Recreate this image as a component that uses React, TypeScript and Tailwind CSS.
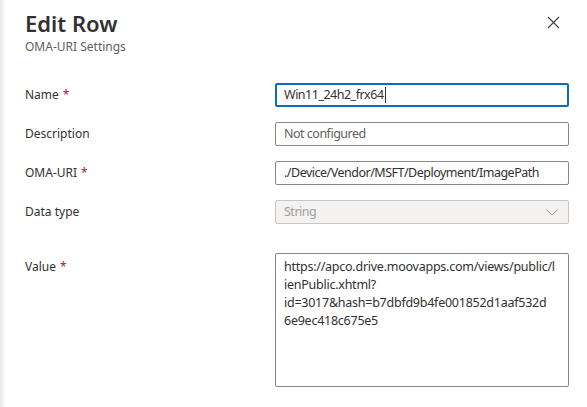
import React from 'react';

const FONT = { fontFamily: '"Noto Sans", "Open Sans", sans-serif' };

function Label({ text, required }: { text: string; required?: boolean }) {
  return (
    <span className="text-[12px] leading-[18px] tracking-normal text-[#323130]">
      {text}
      {required && <span className="ml-[4px] text-[#a4262c]">*</span>}
    </span>
  );
}

export default function App() {
  return (
    <div className="flex h-[407px] w-[587px] overflow-hidden bg-white" style={FONT}>
      <div className="w-[6px] shrink-0 bg-gradient-to-r from-[#e6e6e6] to-white" />
      <div className="flex min-w-0 flex-1 flex-col pl-[19px] pr-[18px]">
        {/* Header */}
        <div className="flex items-start justify-between pt-[7px]">
          <div>
            <h1 className="text-[22px] font-semibold leading-[32px] text-[#323130]">Edit Row</h1>
            <p className="text-[12px] leading-[16px] text-[#605e5c]">OMA-URI Settings</p>
          </div>
          <button className="mt-[9px] mr-[9px] text-[#323130]">
            <svg width="13" height="13" viewBox="0 0 13 13" fill="none" stroke="#444" strokeWidth="1.2">
              <path d="M1 1L12 12M12 1L1 12" />
            </svg>
          </button>
        </div>

        {/* Form */}
        <div className="mt-[28px] grid grid-cols-[250px_minmax(0,1fr)] items-center gap-y-[15px] text-[12.5px] tracking-[-0.5px]">
          <Label text="Name" required />
          <div className="flex h-[24px] items-center rounded-[2px] border-2 border-[#0f6cbd] px-[7px] text-[#323130]">
            Win11_24h2_frx64<span className="ml-[1px] h-[16px] w-px bg-[#323130]" />
          </div>

          <Label text="Description" />
          <div className="flex h-[24px] items-center rounded-[2px] border border-[#8a8886] px-[8px] text-[#605e5c]">
            Not configured
          </div>

          <Label text="OMA-URI" required />
          <div className="flex h-[24px] items-center rounded-[2px] border border-[#8a8886] px-[8px] text-[#323130]">
            ./Device/Vendor/MSFT/Deployment/ImagePath
          </div>

          <Label text="Data type" />
          <div className="flex h-[24px] items-center justify-between rounded-[2px] border border-[#c8c6c4] bg-[#f3f2f1] pl-[8px] pr-[10px] text-[#a19f9d]">
            <span>String</span>
            <svg width="12" height="7" viewBox="0 0 12 7" fill="none" stroke="#a19f9d" strokeWidth="1">
              <path d="M0.5 0.5L6 6L11.5 0.5" />
            </svg>
          </div>

          <div className="mt-[14px] self-start pt-[5px] leading-[18px]">
            <Label text="Value" required />
          </div>
          <div className="mt-[14px] h-[134px] overflow-hidden rounded-[2px] border border-[#8a8886] px-[8px] pt-[4px] leading-[18px] tracking-[-0.25px] whitespace-nowrap text-[#323130]">
            <div>https://apco.drive.moovapps.com/views/public/l</div>
            <div>ienPublic.xhtml?</div>
            <div>id=3017&amp;hash=b7dbfd9b4fe001852d1aaf532d</div>
            <div>6e9ec418c675e5</div>
          </div>
        </div>
      </div>
    </div>
  );
}
